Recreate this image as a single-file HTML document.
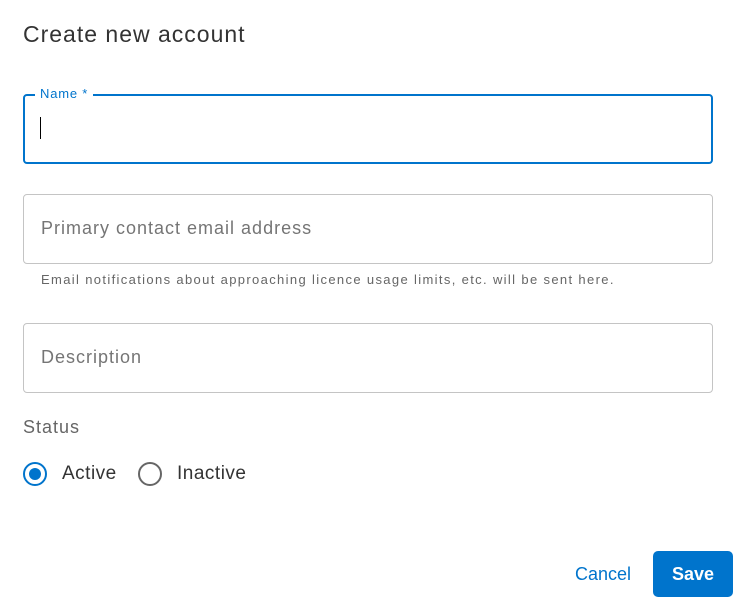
<!DOCTYPE html>
<html><head><style>
body{margin:0;width:734px;height:599px;background:#fff;font-family:"Liberation Sans",sans-serif;position:relative;overflow:hidden}
.a{position:absolute}
.box{position:absolute;left:23px;width:690px;height:70px;border:1px solid #c4c4c4;border-radius:4px;box-sizing:border-box}
.ph{position:absolute;left:41px;font-size:18px;color:#757575;letter-spacing:1px}
</style></head><body>
<div class="a" style="left:23px;top:21px;font-size:23px;color:#333;letter-spacing:1px">Create new account</div>
<div class="box" style="top:94px;border:2px solid #0074cc"></div>
<div class="a" style="left:35px;top:86px;background:#fff;padding:0 5px;font-size:13px;color:#0074cc;letter-spacing:0.8px">Name *</div>
<div class="a" style="left:40px;top:117px;width:1px;height:22px;background:#000"></div>
<div class="box" style="top:194px"></div>
<div class="ph" style="top:218px">Primary contact email address</div>
<div class="a" style="left:41px;top:272px;font-size:13px;color:#666;letter-spacing:1.35px">Email notifications about approaching licence usage limits, etc. will be sent here.</div>
<div class="box" style="top:323px"></div>
<div class="ph" style="top:347px">Description</div>
<div class="a" style="left:23px;top:417px;font-size:18px;color:#666;letter-spacing:1px">Status</div>
<div class="a" style="left:23px;top:462px;width:24px;height:24px;border:2px solid #0074cc;border-radius:50%;box-sizing:border-box"></div>
<div class="a" style="left:29px;top:468px;width:12px;height:12px;background:#0074cc;border-radius:50%"></div>
<div class="a" style="left:62px;top:463px;font-size:19px;color:#333;letter-spacing:0.5px">Active</div>
<div class="a" style="left:138px;top:462px;width:24px;height:24px;border:2px solid #666;border-radius:50%;box-sizing:border-box"></div>
<div class="a" style="left:177px;top:463px;font-size:19px;color:#333;letter-spacing:0.5px">Inactive</div>
<div class="a" style="left:575px;top:564px;font-size:18px;color:#0074cc">Cancel</div>
<div class="a" style="left:653px;top:551px;width:80px;height:46px;background:#0074cc;border-radius:5px;color:#fff;font-size:18px;font-weight:bold;text-align:center;line-height:46px">Save</div>
</body></html>
